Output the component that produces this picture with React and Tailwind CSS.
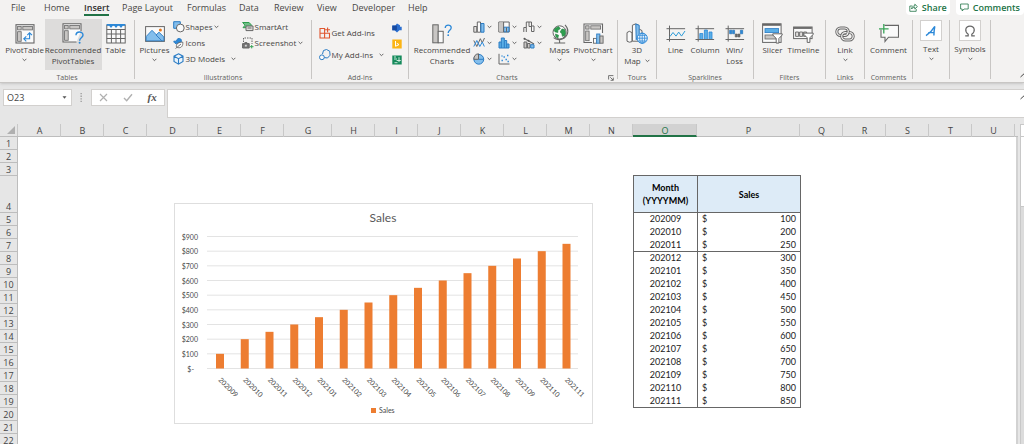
import React, { useState } from 'react';

const tabs = [
  { name: 'File', width: 'w-[33px]' },
  { name: 'Home', width: 'w-[40px]' },
  { name: 'Insert', width: 'w-[38px]' },
  { name: 'Page Layout', width: 'w-[65px]' },
  { name: 'Formulas', width: 'w-[52px]' },
  { name: 'Data', width: 'w-[35px]' },
  { name: 'Review', width: 'w-[43px]' },
  { name: 'View', width: 'w-[35px]' },
  { name: 'Developer', width: 'w-[56px]' },
  { name: 'Help', width: 'w-[34px]' },
];

const columns = [
  { name: 'A', width: 'w-[43px]' },
  { name: 'B', width: 'w-[43px]' },
  { name: 'C', width: 'w-[43px]' },
  { name: 'D', width: 'w-[51px]' },
  { name: 'E', width: 'w-[43px]' },
  { name: 'F', width: 'w-[43px]' },
  { name: 'G', width: 'w-[48px]' },
  { name: 'H', width: 'w-[43px]' },
  { name: 'I', width: 'w-[43px]' },
  { name: 'J', width: 'w-[43px]' },
  { name: 'K', width: 'w-[43px]' },
  { name: 'L', width: 'w-[43px]' },
  { name: 'M', width: 'w-[43px]' },
  { name: 'N', width: 'w-[43px]' },
  { name: 'O', width: 'w-[64px]' },
  { name: 'P', width: 'w-[103px]' },
  { name: 'Q', width: 'w-[43px]' },
  { name: 'R', width: 'w-[43px]' },
  { name: 'S', width: 'w-[43px]' },
  { name: 'T', width: 'w-[43px]' },
  { name: 'U', width: 'w-[43px]' },
];

const rows = Array.from({ length: 22 }, (_, i) => i + 1);

const sales = [
  { month: '202009', value: 100 },
  { month: '202010', value: 200 },
  { month: '202011', value: 250 },
  { month: '202012', value: 300 },
  { month: '202101', value: 350 },
  { month: '202102', value: 400 },
  { month: '202103', value: 450 },
  { month: '202104', value: 500 },
  { month: '202105', value: 550 },
  { month: '202106', value: 600 },
  { month: '202107', value: 650 },
  { month: '202108', value: 700 },
  { month: '202109', value: 750 },
  { month: '202110', value: 800 },
  { month: '202111', value: 850 },
];

const Svg = ({ w = 20, h = 20, children }) => (
  <svg
    width={w}
    height={h}
    viewBox={`0 0 ${w} ${h}`}
    fill="none"
    stroke="#666666"
    strokeWidth="1"
    className="shrink-0"
    aria-hidden="true"
  >
    {children}
  </svg>
);

const Chevron = () => (
  <Svg w={5} h={4}>
    <path d="M.6 .8 2.5 2.7 4.4 .8" />
  </Svg>
);

/* ---------- Large icons ---------- */

const PivotTableIcon = () => (
  <Svg>
    <rect x="1" y=".7" width="18" height="18.3" fill="#fafafa" strokeWidth="1.1" />
    <rect x="2.6" y="2.5" width="3.6" height="3.4" fill="#c8c6c4" strokeWidth=".8" />
    <rect x="7.8" y="2.5" width="9.6" height="3.4" fill="#c8c6c4" strokeWidth=".8" />
    <rect x="2.6" y="7.7" width="3.6" height="9.6" fill="#c8c6c4" strokeWidth=".8" />
    <path d="M9 14.8h5.6V9.3M11.3 12.3 8.8 14.8l2.5 2.5M12.3 11.2l2.3-2.4 2.4 2.4" stroke="#2b88d8" strokeWidth="1.1" />
  </Svg>
);

const RecommendedPivotIcon = () => (
  <Svg w={22} h={21}>
    <path d="M14.5 19H1V.7h18V8" fill="#fafafa" strokeWidth="1.1" />
    <rect x="2.6" y="2.5" width="3.6" height="3.4" fill="#c8c6c4" strokeWidth=".8" />
    <rect x="7.8" y="2.5" width="9.6" height="3.4" fill="#c8c6c4" strokeWidth=".8" />
    <rect x="2.6" y="7.7" width="3.6" height="9.6" fill="#c8c6c4" strokeWidth=".8" />
    <path d="M14 12.3c0-4.4 7-4.2 7-.3 0 2.9-3.4 2.7-3.4 5.7" stroke="#2b88d8" strokeWidth="1.4" />
    <circle cx="17.6" cy="19.8" r="1" fill="#2b88d8" stroke="none" />
  </Svg>
);

const TableIcon = () => (
  <Svg>
    <rect x=".8" y="1" width="18.4" height="18" fill="#fafafa" />
    <path d="M.8 5.5h18.4M.8 10h18.4M.8 14.5h18.4M5.4 5v14M10 5v14M14.6 5v14" />
    <path d="M.8 0h18.4v1.8H.8zM3 1.5h4L5 4zM8 1.5h4L10 4zM13 1.5h4L15 4z" fill="#2b88d8" stroke="none" />
  </Svg>
);

const PicturesIcon = () => (
  <Svg>
    <rect x=".6" y="2.6" width="18.8" height="14.8" fill="#fafafa" />
    <path d="M1.2 12.5 7 6.3l10.2 10.5h-16z" fill="#83beec" stroke="#2b7cc4" strokeWidth=".9" />
    <path d="m11 11 3-2.8 4.9 4.8v3.8h-2z" fill="#83beec" stroke="#2b7cc4" strokeWidth=".9" />
    <circle cx="15.4" cy="6" r="1.5" fill="#e8791e" stroke="none" />
  </Svg>
);

const RecommendedChartsIcon = () => (
  <Svg>
    <rect x=".8" y=".8" width="5.4" height="18" fill="#c8c6c4" />
    <rect x="6.2" y="7.3" width="5" height="11.5" fill="#fafafa" />
    <path d="M13.2 4c0-4 6-3.8 6-.2 0 2.7-3 2.4-3 5.2" stroke="#2b88d8" strokeWidth="1.3" />
    <circle cx="16.2" cy="11.2" r=".9" fill="#2b88d8" stroke="none" />
  </Svg>
);

const MapsIcon = () => (
  <Svg>
    <circle cx="9.6" cy="8.4" r="6.6" fill="#fafafa" />
    <path d="M5 4.5 8.5 2.6l1.8 2-2.6 1.8.3 2-2.8-.4-1.2-1.7zM12 5l2.6.5 1 3.2-1 3-2.2.6-.6-2.7-1.7-1.6zM5.5 10l3 1.2-.6 2.8-2-1.2z" fill="#2e9e4f" stroke="#1e7f3c" strokeWidth=".6" />
    <path d="M15 .9c4.2 4.1 3.6 10-.8 13.1-3.4 2.4-8 2-10.6-.4M9.6 15.6v3M4.2 19h11" strokeWidth="1.1" />
  </Svg>
);

const PivotChartIcon = () => (
  <Svg w={21} h={21}>
    <path d="M9 19.5H1V1h18.5v9" fill="#fafafa" strokeWidth="1.1" />
    <rect x="2.7" y="2.8" width="3.4" height="3.3" fill="#c8c6c4" strokeWidth=".8" />
    <rect x="7.8" y="2.8" width="9.8" height="3.3" fill="#c8c6c4" strokeWidth=".8" />
    <rect x="2.7" y="8" width="3.4" height="9.7" fill="#c8c6c4" strokeWidth=".8" />
    <rect x="10.5" y="15.4" width="3.2" height="4.8" fill="#fafafa" strokeWidth=".9" />
    <rect x="13.7" y="11" width="3.2" height="9.2" fill="#83beec" stroke="#2b7cc4" strokeWidth=".9" />
    <rect x="16.9" y="13" width="3.2" height="7.2" fill="#c8c6c4" strokeWidth=".9" />
  </Svg>
);

const Map3DIcon = () => (
  <Svg w={22} h={21}>
    <path d="M1 9.6 3.3 8.3 6 9.6v9l-2.6.6L1 18.2z" fill="#fafafa" />
    <path d="M6.4 2.2 9.6.9l3 1.3v16H6.4z" fill="#fafafa" />
    <path d="M9.8 1l3.4 1.3v9.4l-3 5z" fill="#83beec" stroke="#2b7cc4" />
    <path d="M13.4 6.2 16 7.6V11" />
    <circle cx="16.2" cy="15.2" r="5.1" fill="#eaf4fc" stroke="#2b88d8" />
    <path d="M16.2 10.1v10.2M11.1 15.2h10.2M12.2 12.3h8M12.2 18h8" stroke="#2b88d8" strokeWidth=".8" />
    <ellipse cx="16.2" cy="15.2" rx="2.5" ry="5.1" stroke="#2b88d8" strokeWidth=".8" />
  </Svg>
);

const SparkLineIcon = () => (
  <Svg>
    <path d="M.5 4.7h18.6M.5 15.5h18.6M3.5 1.6v16" />
    <path d="m4 12.5 3-4 3 3.6 2.7-4 2.8 4L19 7" stroke="#2b9bd8" />
  </Svg>
);

const SparkColumnIcon = () => (
  <Svg>
    <path d="M4.8 9.5h3v6h-3zM9.4 6h3v9.5h-3zM14 8h3v7.5h-3z" fill="#5aaee6" stroke="#2b88d8" strokeWidth=".8" />
    <path d="M.5 4.7h18.6M.5 15.5h18.6M3.2 1.6v16" />
  </Svg>
);

const WinLossIcon = () => (
  <Svg>
    <path d="M4.6 6.2h2.2v3.6H4.6zM7.6 6.2h2v3.6h-2zM15.4 6.2h2.3v3.6h-2.3z" fill="#2b88d8" stroke="#1f6bb0" strokeWidth=".6" />
    <path d="M10.2 10h2v3h-2zM12.8 10H15v3h-2.2z" fill="#666666" strokeWidth=".6" />
    <path d="M.5 4.7h18.6M.5 15.5h18.6M3.2 1.6v16" />
  </Svg>
);

const Funnel = ({ x, y }) => (
  <path
    transform={`translate(${x} ${y})`}
    d="M.5.5h9.4v1.2L6.6 5.2v4.6H3.9V5.2L.5 1.7z"
    fill="#ffffff"
  />
);

const SlicerIcon = () => (
  <Svg w={21} h={21}>
    <rect x=".6" y=".8" width="18.5" height="18.6" fill="#fafafa" />
    <path d="M.8 1.8h18" strokeWidth="2" />
    <rect x="3" y="5.6" width="13.6" height="4" fill="#5aaee6" stroke="#2b7cc4" strokeWidth=".8" />
    <rect x="3" y="12" width="11" height="4" fill="#c8c6c4" strokeWidth=".8" />
    <Funnel x={10.3} y={10.3} />
  </Svg>
);

const TimelineIcon = () => (
  <Svg w={21} h={21}>
    <rect x=".6" y="4" width="18.5" height="11.6" fill="#fafafa" />
    <path d="M.8 5h18" strokeWidth="1.8" />
    <path d="M2.6 9h3v4.4h-3zM6.6 9h3v4.4h-3zM10.6 9h3v4.4h-3z" fill="#e1dfdd" strokeWidth=".9" />
    <Funnel x={10.3} y={9.6} />
  </Svg>
);

const LinkIcon = () => (
  <Svg>
    <rect x="1.8" y="4" width="11.5" height="7.4" rx="3.7" strokeWidth="3" />
    <rect x="1.8" y="4" width="11.5" height="7.4" rx="3.7" stroke="#f3f2f1" strokeWidth="1.2" />
    <rect x="6.7" y="8.6" width="11.5" height="7.4" rx="3.7" strokeWidth="3" />
    <rect x="6.7" y="8.6" width="11.5" height="7.4" rx="3.7" stroke="#f3f2f1" strokeWidth="1.2" />
    <path d="M12.5 9.5c.7-.9.8-1.5.8-2.2" strokeWidth="3" />
    <path d="M12.2 10c.9-.9 1.1-1.8 1.1-3" stroke="#f3f2f1" strokeWidth="1.2" />
  </Svg>
);

const CommentIcon = () => (
  <Svg>
    <path d="M5.5 1.4h14v11.8h-10L6 17.5v-4.3H2V5.6" fill="#fafafa" strokeWidth="1.1" />
    <path d="M4.8 0v9.6M0 4.8h9.6" stroke="#38a457" strokeWidth="1.3" />
  </Svg>
);

const LetterIcon = () => (
  <Svg w={12} h={12}>
    <path d="M1 10.6C4 8.7 7.8 4.8 9.8 1.4c-.5 2.7-.9 6-.9 9.2M3.2 7.6h6" stroke="#2b88d8" strokeWidth="1.4" />
  </Svg>
);

const OmegaIcon = () => (
  <Svg w={12} h={12}>
    <path d="M1.2 10.8h3V9.2C.3 6.6 1.2 1.2 6 1.2s5.7 5.4 1.8 8v1.6h3" strokeWidth="1.2" />
  </Svg>
);

/* ---------- Small icons ---------- */

const ShapesIcon = () => (
  <Svg w={12} h={12}>
    <path d="M.7.7h6.6v6.6H.7z" fill="#83beec" stroke="#2b7cc4" />
    <circle cx="7.3" cy="7" r="3.9" fill="#fafafa" />
  </Svg>
);

const IconsIcon = () => (
  <Svg w={12} h={12}>
    <path d="M.8 4.2h2.7C3.5.6 8.6.6 8.4 3.8c0 2.2-1.7 3.2-3.4 3.2C2.5 7 1 6 .8 4.2z" fill="#2b88d8" stroke="#2b7cc4" />
    <path d="M3.4 9.7C3 6.5 6 5 9.8 5.2c.3 3.5-1.3 5.7-4 5.5-1 0-1.8-.2-2.4-1zM2.5 11.5 8 7" fill="#fafafa" strokeWidth=".9" />
  </Svg>
);

const CubeIcon = () => (
  <Svg w={12} h={12}>
    <path d="m5.5.8 4.5 2.4v5.2l-4.5 2.7L1 8.4V3.2zM1 3.2l4.5 2.5L10 3.2M5.5 5.7v5.2" fill="#eaf4fc" stroke="#2b7cc4" strokeWidth="1.1" />
  </Svg>
);

const SmartArtIcon = () => (
  <Svg w={12} h={12}>
    <path d="M.6 1.5h6.5l2.5 2.7-2.5 2.5H1l2-2.5z" fill="#6fbf86" stroke="#2e9e4f" />
    <path d="M4 5h7v4.6H4z" fill="#e1dfdd" />
    <path d="M5.5 7h4" />
  </Svg>
);

const ScreenshotIcon = () => (
  <Svg w={12} h={12}>
    <path d="M1.5 5V1H10v6" strokeDasharray="1.5 1" />
    <path d="M.6 6.6h6.6V11H.6zM2.5 5.6h2.7" fill="#777777" />
    <circle cx="3.9" cy="8.8" r="1.2" fill="#fafafa" strokeWidth=".6" />
    <path d="M9.7 8v3.4M8 9.7h3.5" stroke="#38a457" />
  </Svg>
);

const GetAddinsIcon = () => (
  <Svg w={12} h={12}>
    <path d="M1 1.5h4.6V11H1zM1 6.2h9.5V11H1zM5.6 6v5M8.6.4v4.8M6.2 2.8H11" stroke="#e0562f" strokeWidth="1.1" />
  </Svg>
);

const MyAddinsIcon = () => (
  <Svg w={12} h={12}>
    <path d="m4.5 1.5 3-1 3.2 1.7.4 4L8.5 9 5 8.5" stroke="#2b7cc4" />
    <path d="M4.5 1.5 3.5 5" stroke="#2b7cc4" />
    <circle cx="2.9" cy="8.3" r="2.4" fill="#fafafa" stroke="#2b7cc4" />
  </Svg>
);

const VisioIcon = () => (
  <Svg w={10} h={10}>
    <path d="M5 .4 8 2.3v1.4h1.7v3.6H7.4L5 9.5 2.6 7.3H.3V2.6h3z" fill="#2b6fd0" stroke="none" />
    <path d="M.3 2.6h4.6v4.7H.3z" fill="#174aa0" stroke="none" />
  </Svg>
);

const BingIcon = () => (
  <Svg w={10} h={10}>
    <path d="M.3.5h9.4v9H.3z" fill="#fbb515" stroke="none" />
    <path d="M3.5 2v5.3L7 5.6 4.8 4.3" stroke="#ffffff" />
  </Svg>
);

const PeopleGraphIcon = () => (
  <Svg w={10} h={10}>
    <path d="M.3.5h9.4v9H.3z" fill="#158a5b" stroke="none" />
    <path d="M2 2h2M2 4h3M7 2.2v5M4.6 5.5h4.2M2.5 7.7h3" stroke="#d8f0e4" strokeWidth=".9" />
  </Svg>
);

const ColumnChartIcon = () => (
  <Svg w={12} h={12}>
    <path d="M.8 5.5h3v5.7h-3z" fill="#e1dfdd" />
    <path d="M4.3 1h3.2v10.2H4.3z" fill="#fafafa" />
    <path d="M7.9 2.5H11v8.7H7.9z" fill="#83beec" stroke="#2b7cc4" />
  </Svg>
);

const TreemapIcon = () => (
  <Svg w={12} h={12}>
    <path d="M.8 1h10.4v10H.8z" fill="#fafafa" />
    <path d="M1.2 1.4h4v9.2h-4z" fill="#c8c6c4" stroke="none" />
    <path d="M5.6 6.2H11v4.6H5.6z" fill="#83beec" stroke="#2b7cc4" />
    <path d="M5.6 1v10M8.5 6.5v4.3" />
  </Svg>
);

const WaterfallIcon = () => (
  <Svg w={12} h={12}>
    <path d="M.8 11V6.5h2.5V1h5.2v6M3.3 6.5V11M6 1v4.5h2.5" />
    <path d="M8.5 5H11v5.5H8.5z" fill="#fafafa" />
  </Svg>
);

const LineChartIcon = () => (
  <Svg w={12} h={12}>
    <path d="m.8 3.5 3 6 3.5-7.8 2 4L11.5 1" />
    <path d="m.8 9.5 3-6 3 6L9.3 5l2 4.500" stroke="#2b88d8" />
  </Svg>
);

const HistogramIcon = () => (
  <Svg w={12} h={12}>
    <path d="M1 11V5h2.3V1h3v2.5h2.4V7H11v4z" fill="#5aaee6" stroke="#2b7cc4" />
    <path d="M3.3 5v6M6.3 4v7M8.7 7v4" stroke="#2b7cc4" />
  </Svg>
);

const ComboIcon = () => (
  <Svg w={12} h={12}>
    <path d="M1 5h2.8v6H1zM4.4 6.5H7V11H4.4z" fill="#c8c6c4" />
    <path d="M7.7 7.7H11V11H7.7z" fill="#83beec" stroke="#2b7cc4" />
    <path d="m1 1.5 4 2 6 3.5" strokeWidth="1.2" />
    <circle cx="1.5" cy="1.7" r="1" fill="#555555" stroke="none" />
    <circle cx="5.5" cy="3.7" r="1" fill="#555555" stroke="none" />
  </Svg>
);

const PieIcon = () => (
  <Svg w={12} h={12}>
    <circle cx="5.8" cy="6.3" r="4.9" fill="#83beec" stroke="#2b7cc4" />
    <path d="M5.5 6.3V.8C2.600.9.8 3 .8 6.3z" fill="#c8c6c4" />
    <path d="M5.5 6.3h5.2" stroke="#2b7cc4" />
  </Svg>
);

const ScatterIcon = () => (
  <Svg w={12} h={12}>
    <path d="M1 .8V11h10.5" />
    <path d="M3.5 7.5h1.4M5.5 4h1.4M9 2.5h1.4M7.5 6.5h1.4M9.500 8.5h1.4M3.5 3h1" stroke="#2b88d8" strokeWidth="1.3" />
  </Svg>
);

const DialogLauncherIcon = () => (
  <Svg w={6} h={6}>
    <path d="M.6 4.5V.6h4.8M2.3 2.3l2.8 2.8M5.3 2.6v2.7H2.6" strokeWidth=".9" />
  </Svg>
);

/* ---------- Ribbon parts ---------- */

const Group = ({ label, width, launcher, children }) => (
  <>
    <section className={`${width} flex shrink-0 flex-col`}>
      <div className="flex h-[51px] items-stretch justify-center">{children}</div>
      <div className="flex h-3 items-end justify-center text-[7px] leading-[9px] text-[#605e5c]">
        <span className="flex-1 text-center">{label}</span>
        {launcher && (
          <button className="flex w-3 justify-center pb-px" aria-label={`${label} settings`}>
            <DialogLauncherIcon />
          </button>
        )}
      </div>
    </section>
    <div className="mt-px h-[59px] w-px shrink-0 bg-[#c8c6c4]" />
  </>
);

const BigButton = ({ icon, lines, width, chevron, inlineChevron, active }) => (
  <button
    className={`${width} flex shrink-0 flex-col items-center text-[8px] leading-[11px] whitespace-nowrap ${
      active ? 'bg-[#dddcdb]' : ''
    }`}
  >
    <span className="flex h-[25px] items-center justify-center pt-1">{icon}</span>
    {lines.map((line, i) => (
      <span key={line} className="flex items-center gap-1">
        {line}
        {inlineChevron && i === lines.length - 1 && <Chevron />}
      </span>
    ))}
    {chevron && (
      <span className="flex h-[9px] items-center">
        <Chevron />
      </span>
    )}
  </button>
);

const SmallButton = ({ icon, label, chevron, far }) => (
  <button className="flex h-4 items-center gap-px text-[8px] whitespace-nowrap">
    {icon}
    <span>{label}</span>
    {chevron && (
      <span className={far ? 'ml-[5px]' : 'ml-px'}>
        <Chevron />
      </span>
    )}
  </button>
);

const ChartButton = ({ icon, label }) => (
  <button className="flex h-4 w-[25px] items-center gap-[2px]" aria-label={label}>
    {icon}
    <Chevron />
  </button>
);

const BoxedButton = ({ icon, label, width }) => (
  <button className={`${width} flex flex-col items-center pt-px text-[8px] leading-[11px]`}>
    <span className="mb-[2px] flex h-[21px] w-[22px] shrink-0 items-center justify-center border border-[#d2d0ce] bg-white">
      {icon}
    </span>
    {label}
    <span className="flex h-[9px] items-center">
      <Chevron />
    </span>
  </button>
);

const Ribbon = () => {
  const [activeTab, setActiveTab] = useState('Insert');

  return (
    <header className="shrink-0 border-b border-[#c8c6c4] bg-[#f3f2f1] text-[#484644] shadow-sm">
      <div className="flex h-[19px] items-start justify-between">
        <nav className="flex pl-[11px]">
          {tabs.map((tab) => (
            <div key={tab.name} className={`${tab.width} flex shrink-0`}>
              <button
                onClick={() => setActiveTab(tab.name)}
                className={`h-4 border-b-2 text-[9px] leading-[16px] whitespace-nowrap ${
                  activeTab === tab.name
                    ? 'border-[#217346] font-semibold text-[#333333]'
                    : 'border-transparent'
                }`}
              >
                {tab.name}
              </button>
            </div>
          ))}
        </nav>
        <div className="flex gap-[6px] text-[9px] font-semibold text-[#217346]">
          <button className="flex h-[15px] items-center gap-1 rounded-b-sm bg-white px-[3px]">
            <svg width="9" height="9" viewBox="0 0 9 9" fill="none" stroke="#217346" strokeWidth=".8" aria-hidden="true">
              <path d="M3.5 3H.8v5.3h6.4V6M2.5 6c.2-2 1.5-3 3.3-3V1.2l2.600 2.4L5.8 6V4.4C4.4 4.4 3.3 4.9 2.5 6z" />
            </svg>
            Share
          </button>
          <button className="flex h-[15px] items-center gap-1 rounded-b-sm bg-white px-1">
            <svg width="9" height="9" viewBox="0 0 9 9" fill="none" stroke="#217346" strokeWidth=".8" aria-hidden="true">
              <path d="M.6 1h7.6v5H4L2.2 8V6H.6z" />
            </svg>
            Comments
          </button>
        </div>
      </div>

      <div className="flex h-[63px]">
        <Group label="Tables" width="w-[134px]">
          <BigButton icon={<PivotTableIcon />} lines={['PivotTable']} width="w-[40px]" chevron />
          <BigButton
            icon={<RecommendedPivotIcon />}
            lines={['Recommended', 'PivotTables']}
            width="w-[57px]"
            active
          />
          <BigButton icon={<TableIcon />} lines={['Table']} width="w-[28px]" />
        </Group>

        <Group label="Illustrations" width="w-[176px]">
          <BigButton icon={<PicturesIcon />} lines={['Pictures']} width="w-[36px]" chevron />
          <div className="w-[69px] shrink-0">
            <SmallButton icon={<ShapesIcon />} label="Shapes" chevron />
            <SmallButton icon={<IconsIcon />} label="Icons" />
            <SmallButton icon={<CubeIcon />} label="3D Models" chevron far />
          </div>
          <div className="w-[68px] shrink-0">
            <SmallButton icon={<SmartArtIcon />} label="SmartArt" />
            <SmallButton icon={<ScreenshotIcon />} label="Screenshot" chevron />
          </div>
        </Group>

        <Group label="Add-ins" width="w-[96px]">
          <div className="flex w-[73px] shrink-0 flex-col gap-[6px] pt-[6px]">
            <SmallButton icon={<GetAddinsIcon />} label="Get Add-ins" />
            <SmallButton icon={<MyAddinsIcon />} label="My Add-ins" chevron far />
          </div>
          <div className="flex flex-col gap-[6px] pt-1">
            <button aria-label="Visio Data Visualizer"><VisioIcon /></button>
            <button aria-label="Bing Maps"><BingIcon /></button>
            <button aria-label="People Graph"><PeopleGraphIcon /></button>
          </div>
        </Group>

        <Group label="Charts" width="w-[208px]" launcher>
          <BigButton icon={<RecommendedChartsIcon />} lines={['Recommended', 'Charts']} width="w-[61px]" />
          <div className="grid shrink-0 grid-cols-3 content-start">
            <ChartButton icon={<ColumnChartIcon />} label="Column chart" />
            <ChartButton icon={<TreemapIcon />} label="Hierarchy chart" />
            <ChartButton icon={<WaterfallIcon />} label="Waterfall chart" />
            <ChartButton icon={<LineChartIcon />} label="Line chart" />
            <ChartButton icon={<HistogramIcon />} label="Statistic chart" />
            <ChartButton icon={<ComboIcon />} label="Combo chart" />
            <ChartButton icon={<PieIcon />} label="Pie chart" />
            <ChartButton icon={<ScatterIcon />} label="Scatter chart" />
          </div>
          <BigButton icon={<MapsIcon />} lines={['Maps']} width="w-[24px]" chevron />
          <BigButton icon={<PivotChartIcon />} lines={['PivotChart']} width="w-[43px]" chevron />
        </Group>

        <Group label="Tours" width="w-[38px]">
          <BigButton icon={<Map3DIcon />} lines={['3D', 'Map']} width="w-[30px]" inlineChevron />
        </Group>

        <Group label="Sparklines" width="w-[96px]">
          <BigButton icon={<SparkLineIcon />} lines={['Line']} width="w-[28px]" />
          <BigButton icon={<SparkColumnIcon />} lines={['Column']} width="w-[31px]" />
          <BigButton icon={<WinLossIcon />} lines={['Win/', 'Loss']} width="w-[28px]" />
        </Group>

        <Group label="Filters" width="w-[71px]">
          <BigButton icon={<SlicerIcon />} lines={['Slicer']} width="w-[28px]" />
          <BigButton icon={<TimelineIcon />} lines={['Timeline']} width="w-[34px]" />
        </Group>

        <Group label="Links" width="w-[38px]">
          <BigButton icon={<LinkIcon />} lines={['Link']} width="w-[28px]" chevron />
        </Group>

        <Group label="Comments" width="w-[47px]">
          <BigButton icon={<CommentIcon />} lines={['Comment']} width="w-[40px]" />
        </Group>

        <Group label="" width="w-[36px]">
          <BoxedButton icon={<LetterIcon />} label="Text" width="w-[30px]" />
        </Group>

        <Group label="" width="w-[40px]">
          <BoxedButton icon={<OmegaIcon />} label="Symbols" width="w-[38px]" />
        </Group>

        <div className="flex flex-1 items-end justify-end overflow-hidden pb-1">
          <button aria-label="Collapse ribbon">
            <svg width="4" height="5" viewBox="0 0 4 5" fill="none" stroke="#444444" aria-hidden="true">
              <path d="M.5 4 4 .8" />
            </svg>
          </button>
        </div>
      </div>
    </header>
  );
};

const FormulaBar = () => {
  const [cell, setCell] = useState('O23');
  const [formula, setFormula] = useState('');

  return (
    <div className="flex h-[41px] shrink-0 items-start pt-[6px] pl-[3px]">
      <div className="flex h-[17px] w-[69px] shrink-0 items-center border border-[#d2d0ce] bg-white">
        <input
          aria-label="Name box"
          value={cell}
          onChange={(e) => setCell(e.target.value)}
          className="w-full min-w-0 flex-1 pl-[3px] text-[9px] leading-[13px] text-[#444444] outline-none"
        />
        <button className="px-1" aria-label="Choose name">
          <svg width="5" height="3" viewBox="0 0 5 3" aria-hidden="true">
            <path d="M.5.3h4l-2 2.400z" fill="#555555" />
          </svg>
        </button>
      </div>
      <svg width="19" height="17" viewBox="0 0 19 17" fill="#999999" className="shrink-0" aria-hidden="true">
        <path d="M8.5 4h1.3v1.3H8.5zM8.5 6.6h1.3v1.3H8.5zM8.5 9.2h1.3v1.3H8.5zM8.5 11.8h1.3v1.3H8.5z" />
      </svg>
      <div className="flex h-[17px] w-[74px] shrink-0 items-center justify-around border border-[#d2d0ce] bg-white">
        <button aria-label="Cancel">
          <svg width="9" height="9" viewBox="0 0 9 9" stroke="#b0b0b0" strokeWidth="1.2" aria-hidden="true">
            <path d="m1 1 7 7M8 1 1 8" />
          </svg>
        </button>
        <button aria-label="Enter">
          <svg width="10" height="9" viewBox="0 0 10 9" fill="none" stroke="#b0b0b0" strokeWidth="1.4" aria-hidden="true">
            <path d="m1 5 2.7 2.7L9 1.3" />
          </svg>
        </button>
        <button className="font-['Liberation_Serif',serif] text-[11px] leading-[13px] font-bold text-[#555555] italic">
          fx
        </button>
      </div>
      <div className="ml-[2px] flex h-[29px] min-w-0 flex-1 items-start border border-r-0 border-[#d2d0ce] bg-white">
        <input
          aria-label="Formula bar"
          value={formula}
          onChange={(e) => setFormula(e.target.value)}
          className="min-w-0 flex-1 px-1 text-[9px] outline-none"
        />
        <button className="pt-[5px]" aria-label="Collapse formula bar">
          <svg width="4" height="5" viewBox="0 0 4 5" fill="none" stroke="#444444" aria-hidden="true">
            <path d="M.5 4 4 .8" />
          </svg>
        </button>
      </div>
    </div>
  );
};

const SalesChart = () => {
  const ticks = [0, 100, 200, 300, 400, 500, 600, 700, 800, 900];
  const base = 164.5;
  const toY = (value) => base - (value * 132) / 900;
  const toX = (i) => 45 + i * 24.75;

  return (
    <svg
      width="419"
      height="221"
      viewBox="0 0 417 219"
      className="shrink-0 border border-[#dedede] bg-white font-[Lato,sans-serif]"
      role="img"
      aria-label="Sales by month"
    >
      <text x="208" y="18" fontSize="12" fill="#595959" textAnchor="middle">
        Sales
      </text>
      {ticks.map((tick) => (
        <g key={tick}>
          <line x1="32" x2="403" y1={toY(tick)} y2={toY(tick)} stroke="#e3e3e3" />
          <text
            x={tick === 0 ? 19 : 23}
            y={toY(tick) + 3}
            fontSize="7"
            fill="#4a4a4a"
            textAnchor="end"
          >
            {tick === 0 ? '$-' : `$${tick}`}
          </text>
        </g>
      ))}
      {sales.map((item, i) => (
        <g key={item.month}>
          <rect x={toX(i) - 4} y={toY(item.value)} width="8" height={base - toY(item.value)} fill="#ed7d31" />
          <text
            transform={`translate(${toX(i) - 2} ${base + 12}) rotate(45)`}
            fontSize="7"
            fill="#4a4a4a"
          >
            {item.month}
          </text>
        </g>
      ))}
      <rect x="196" y="204" width="5" height="5" fill="#ed7d31" />
      <text x="204" y="209" fontSize="7" fill="#4a4a4a">
        Sales
      </text>
    </svg>
  );
};

const SalesTable = () => (
  <table className="ml-[40px] w-[168px] shrink-0 border-collapse border border-[#666666] font-[Lato,sans-serif] text-[9px] leading-[13px] text-[#222222]">
    <thead>
      <tr className="h-[37px] bg-[#ddebf7] text-black">
        <th className="w-[64px] border border-[#666666] p-0">
          Month
          <br />
          (YYYYMM)
        </th>
        <th className="border border-[#666666] p-0">Sales</th>
      </tr>
    </thead>
    <tbody>
      {sales.map((item) => (
        <tr
          key={item.month}
          className={`h-[13px] ${item.month === '202011' ? 'border-b border-[#666666]' : ''}`}
        >
          <td className="border-r border-[#666666] p-0 text-center leading-[12px]">{item.month}</td>
          <td className="p-0 leading-[12px]">
            <div className="flex justify-between px-1">
              <span>$</span>
              <span>{item.value}</span>
            </div>
          </td>
        </tr>
      ))}
    </tbody>
  </table>
);

const App = () => {
  return (
    <div className="flex h-screen flex-col overflow-hidden bg-[#e6e6e6] font-['Open_Sans',sans-serif]">
      <Ribbon />
      <FormulaBar />

      <div className="flex min-h-0 flex-1">
        <main className="flex min-w-0 flex-1 flex-col overflow-hidden">
          {/* Column headers */}
          <div className="flex h-[13px] shrink-0 border-b border-[#bdbdbd] text-[9px] leading-[13px] text-[#444444]">
            <div className="flex w-[18px] shrink-0 justify-end border-r border-[#c8c8c8] pr-[2px]">
              <svg width="9" height="11" viewBox="0 0 9 11" aria-hidden="true">
                <path d="M9 2v8H1z" fill="#b0b0b0" />
              </svg>
            </div>
            {columns.map((col) => (
              <div
                key={col.name}
                className={`${col.width} h-[13px] shrink-0 border-r border-[#c8c8c8] pl-px text-center ${
                  col.name === 'O' ? 'border-b-2 border-b-[#217346] bg-[#d2d2d2] text-[#217346]' : ''
                }`}
              >
                {col.name}
              </div>
            ))}
          </div>

          <div className="flex min-h-0 flex-1">
            {/* Row headers */}
            <div className="w-[18px] shrink-0 border-r border-[#bdbdbd] text-center text-[9px] leading-[7px] text-[#444444]">
              {rows.map((row) => (
                <div
                  key={row}
                  className={`flex items-end justify-center border-b border-[#bdbdbd] pb-[2px] ${
                    row === 4 ? 'h-[37px]' : 'h-[13px]'
                  }`}
                >
                  {row}
                </div>
              ))}
            </div>

            <div className="flex min-w-0 flex-1 items-start border-r-2 border-[#d2d2d2] bg-white pl-[156px]">
              <div className="shrink-0 pt-[66px]">
                <SalesChart />
              </div>
              <div className="shrink-0 pt-[38px]">
                <SalesTable />
              </div>
            </div>
          </div>
        </main>

        {/* Vertical scrollbar */}
        <div className="ml-[2px] w-1 shrink-0 border-l border-[#c8c8c8] bg-[#dcdcdc]">
          <div className="h-[13px] border-y border-[#c8c8c8] bg-white" />
          <div className="h-[70px] border-b border-[#c8c8c8] bg-white" />
        </div>
      </div>
    </div>
  );
};

export default App;
